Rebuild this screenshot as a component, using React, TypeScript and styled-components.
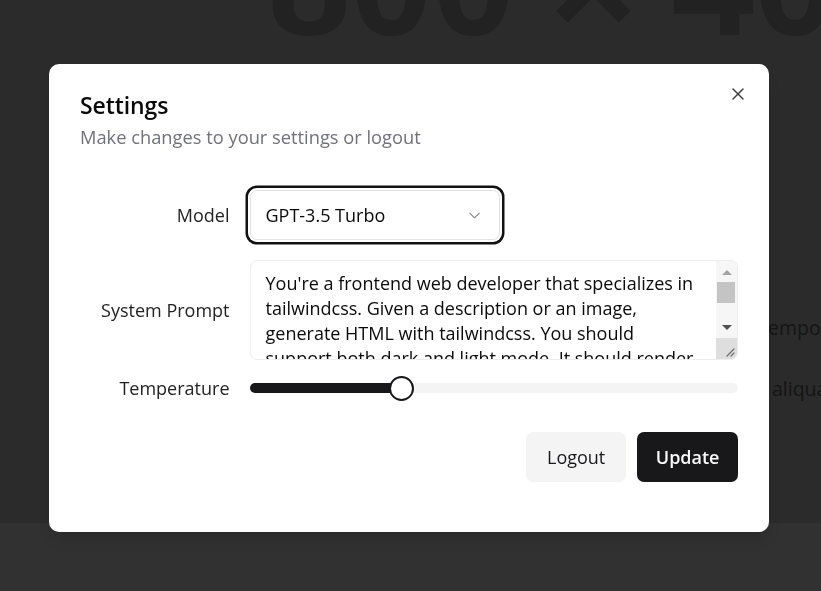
import React, { useState } from "react";
import styled, { createGlobalStyle } from "styled-components";
import { X, ChevronDown } from "lucide-react";

const GlobalStyle = createGlobalStyle`
	* {
		box-sizing: border-box;
	}
	body {
		margin: 0;
		background: #2b2b2b;
		font-family: "Open Sans", "Noto Sans", sans-serif;
		overflow: hidden;
	}
`;

const PROMPT =
	"You're a frontend web developer that specializes in tailwindcss. Given a description or an image, generate HTML with tailwindcss. You should support both dark and light mode. It should render nicely on desktop, tablet, and mobile. Keep your responses concise and just return HTML that would appear in the <body> no need for <head>. Use placeholders for all images.";

const App: React.FC = () => {
	const [model] = useState("GPT-3.5 Turbo");
	const [prompt, setPrompt] = useState(PROMPT);
	const [temperature] = useState(0.3);

	return (
		<>
			<GlobalStyle />
			<Page>
				<Main>
					<Hero>800 × 400</Hero>
					<SideText>
						<SideLine indent={0}>tempor incididunt ut</SideLine>
						<SideLine indent={11}>aliqua. Ut enim ad</SideLine>
					</SideText>
				</Main>
				<Footer />
			</Page>
			<Overlay>
				<Dialog>
					<CloseButton aria-label="Close">
						<X size={20} strokeWidth={1.7} />
					</CloseButton>
					<Header>
						<Title>Settings</Title>
						<Description>Make changes to your settings or logout</Description>
					</Header>
					<Form>
						<Label>Model</Label>
						<Field>
							<SelectTrigger type="button">
								<span>{model}</span>
								<ChevronDown size={19} strokeWidth={1.5} />
							</SelectTrigger>
						</Field>
						<Label>System Prompt</Label>
						<Field>
							<PromptBox>
								<PromptArea value={prompt} onChange={(e) => setPrompt(e.target.value)} />
								<ScrollBar>
									<ScrollButton>
										<Arrow dir="up" />
									</ScrollButton>
									<ScrollThumb />
									<ScrollTrack />
									<ScrollButton>
										<Arrow dir="down" />
									</ScrollButton>
									<ResizeCorner>
										<svg width="10" height="10" viewBox="0 0 10 10">
											<path d="M9 2 L2 9 M9 6 L6 9" stroke="#6b6b6b" strokeWidth="1.2" strokeLinecap="round" />
										</svg>
									</ResizeCorner>
								</ScrollBar>
							</PromptBox>
						</Field>
						<Label>Temperature</Label>
						<Field>
							<SliderRoot>
								<Track>
									<Range style={{ width: `calc(${temperature} * (100% - 25px) + 12.5px)` }} />
								</Track>
								<Thumb style={{ left: `calc(${temperature} * (100% - 25px))` }} />
							</SliderRoot>
						</Field>
					</Form>
					<Actions>
						<Button variant="secondary">Logout</Button>
						<Button variant="primary">Update</Button>
					</Actions>
				</Dialog>
			</Overlay>
		</>
	);
};
export default App;

const Page = styled.div`
	height: 591px;
	display: flex;
	flex-direction: column;
	overflow: hidden;
`;

const Main = styled.div`
	height: 523px;
	background: #2b2b2b;
	display: flex;
	flex-direction: column;
`;

const Hero = styled.div`
	margin: -91px 0 0 268px;
	font-family: "Liberation Sans", Arial, sans-serif;
	font-weight: 700;
	font-size: 148px;
	line-height: 150px;
	word-spacing: -6px;
	white-space: nowrap;
	color: #222222;
`;

const SideText = styled.div`
	margin: 256px 0 0 761px;
	display: flex;
	flex-direction: column;
	gap: 36px;
	font-size: 19.5px;
	line-height: 25px;
	color: #151515;
	white-space: nowrap;
`;

const SideLine = styled.div<{ indent: number }>`
	padding-left: ${(p) => p.indent}px;
`;

const Footer = styled.div`
	flex: 1;
	background: #313131;
`;

const Overlay = styled.div`
	position: fixed;
	inset: 0;
	display: flex;
	align-items: flex-start;
	padding: 64px 0 0 49px;
`;

const Dialog = styled.div`
	position: relative;
	width: 720px;
	background: #ffffff;
	border-radius: 10px;
	padding: 30px 31px 50px 31px;
	box-shadow: 0 10px 15px -3px rgba(0, 0, 0, 0.1), 0 4px 6px -4px rgba(0, 0, 0, 0.1);
`;

const CloseButton = styled.button`
	position: absolute;
	top: 20px;
	right: 21px;
	width: 20px;
	height: 20px;
	padding: 0;
	border: none;
	background: transparent;
	color: #3a3a3a;
	display: flex;
	align-items: center;
	justify-content: center;
	cursor: pointer;
`;

const Header = styled.div`
	display: flex;
	flex-direction: column;
	gap: 7.5px;
`;

const Title = styled.h2`
	margin: 0;
	font-size: 23px;
	font-weight: 600;
	line-height: 22.5px;
	letter-spacing: -0.1px;
	color: #0a0a0a;
`;

const Description = styled.p`
	margin: 0;
	font-size: 18.3px;
	line-height: 25px;
	color: #71717a;
`;

const Form = styled.div`
	margin-top: 41px;
	display: grid;
	grid-template-columns: repeat(4, 1fr);
	grid-template-rows: 50px 100px 16px;
	column-gap: 20px;
	row-gap: 20px;
	align-items: center;
`;

const Label = styled.label`
	text-align: right;
	font-size: 18px;
	line-height: 25px;
	color: #222222;
`;

const Field = styled.div`
	grid-column: span 3;
	height: 100%;
	display: flex;
	align-items: center;
`;

const SelectTrigger = styled.button`
	width: 250px;
	height: 50px;
	padding: 0 15px;
	display: flex;
	align-items: center;
	justify-content: space-between;
	border: 1px solid #e4e4e7;
	border-radius: 7px;
	background: #ffffff;
	box-shadow: 0 0 0 2px #ffffff, 0 0 0 4.5px #111111;
	font-family: inherit;
	font-size: 18px;
	color: #0a0a0a;
	cursor: pointer;
	svg {
		color: #8a8a8a;
	}
`;

const PromptBox = styled.div`
	width: 100%;
	height: 100px;
	display: flex;
	border: 1px solid #ededf0;
	border-radius: 7px;
	overflow: hidden;
	background: #ffffff;
`;

const PromptArea = styled.textarea`
	flex: 1;
	min-width: 0;
	height: 100%;
	padding: 10px 15px;
	border: none;
	font-family: inherit;
	font-size: 18px;
	line-height: 25px;
	color: #0a0a0a;
	background: transparent;
	outline: none;
	resize: none;
	overflow: hidden;
`;

const ScrollBar = styled.div`
	width: 21px;
	flex-shrink: 0;
	display: flex;
	flex-direction: column;
	background: #f6f6f6;
`;

const ScrollButton = styled.div`
	height: 21px;
	display: flex;
	align-items: center;
	justify-content: center;
`;

const Arrow = styled.div<{ dir: "up" | "down" }>`
	width: 0;
	height: 0;
	border-left: 5px solid transparent;
	border-right: 5px solid transparent;
	${(p) =>
		p.dir === "up"
			? "border-bottom: 5px solid #a3a3a3; margin-top: 2px;"
			: "border-top: 5px solid #505050; margin-bottom: 1px;"}
`;

const ScrollThumb = styled.div`
	height: 21px;
	margin: 0 2px 0 1px;
	background: #c4c4c4;
`;

const ScrollTrack = styled.div`
	flex: 1;
`;

const ResizeCorner = styled.div`
	height: 21px;
	background: #dedede;
	display: flex;
	align-items: flex-end;
	justify-content: flex-end;
	padding: 0 2px 2px 0;
`;

const SliderRoot = styled.div`
	position: relative;
	width: 100%;
	height: 16px;
	display: flex;
	align-items: center;
`;

const Track = styled.div`
	position: relative;
	width: 100%;
	height: 10px;
	border-radius: 999px;
	background: #f4f4f5;
	overflow: hidden;
`;

const Range = styled.div`
	height: 100%;
	background: #18181b;
`;

const Thumb = styled.div`
	position: absolute;
	top: 50%;
	width: 25px;
	height: 25px;
	margin-top: -12.5px;
	border-radius: 50%;
	border: 2.5px solid #18181b;
	background: #ffffff;
`;

const Actions = styled.div`
	margin-top: 36px;
	display: flex;
	justify-content: flex-end;
	gap: 11px;
`;

const Button = styled.button<{ variant: "primary" | "secondary" }>`
	height: 50px;
	padding: 0 ${(p) => (p.variant === "primary" ? 18.5 : 21)}px;
	border: none;
	border-radius: 7px;
	font-family: inherit;
	font-size: 18px;
	font-weight: ${(p) => (p.variant === "primary" ? 600 : 400)};
	background: ${(p) => (p.variant === "primary" ? "#18181b" : "#f4f4f5")};
	color: ${(p) => (p.variant === "primary" ? "#fafafa" : "#18181b")};
	cursor: pointer;
`;
